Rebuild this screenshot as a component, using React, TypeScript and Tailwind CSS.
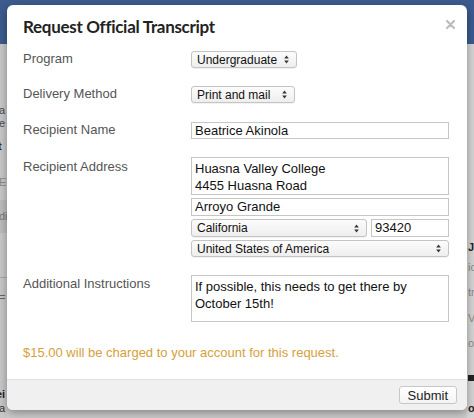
import React from "react";

function SelectBox({ value, className }: { value: string; className: string }) {
  return (
    <div
      className={`flex items-center justify-between pl-[5px] pr-[7px] text-[12px] text-[#111] rounded-[3px] border border-[#c4c4c4] bg-gradient-to-b from-[#fcfcfc] to-[#eeeeee] shadow-[0_1px_1px_rgba(0,0,0,0.06)] ${className}`}
    >
      <span className="leading-[14px] whitespace-nowrap">{value}</span>
      <svg width="5" height="9" viewBox="0 0 5 9" className="shrink-0">
        <path d="M2.5 0.5 L4.8 3.4 L0.2 3.4 Z" fill="#333" />
        <path d="M2.5 8.5 L4.8 5.6 L0.2 5.6 Z" fill="#333" />
      </svg>
    </div>
  );
}

function TextInput({ value, className }: { value: string; className: string }) {
  return (
    <input
      readOnly
      value={value}
      className={`block border border-[#c6c6c6] bg-white px-[3px] text-[13px] text-[#111] outline-none ${className}`}
    />
  );
}

function Area({ value, className }: { value: string; className: string }) {
  return (
    <textarea
      readOnly
      value={value}
      className={`block resize-none overflow-hidden border border-[#c6c6c6] bg-white px-[3px] pt-[2px] text-[13px] leading-[17px] text-[#111] outline-none ${className}`}
    />
  );
}

export default function App() {
  const label = "text-[13px] leading-[15px] text-[#555]";
  return (
    <div className="relative w-[474px] h-[418px] overflow-hidden font-['Liberation_Sans',Arial,sans-serif] bg-[#cdcdcd]">
      {/* backdrop page (dimmed) */}
      <div className="flex flex-col h-full">
        <div className="h-[44px] bg-[#3d5b8e] shrink-0" />
        <div className="flex flex-1 justify-between">
          <div className="w-[7px] overflow-hidden bg-[#c8c8c8] flex flex-col text-[11px] leading-[11px] text-[#4a4a4a]">
            <div className="mt-[61px] -ml-[1px]">a</div>
            <div className="mt-[2px] -ml-[1px]">e</div>
            <div className="mt-[12px] -ml-[2px] font-bold text-[#222]">t</div>
            <div className="mt-[25px] -ml-[1px] text-[#8a8a8a]">E</div>
            <div className="mt-[12px] h-[33px] bg-[#bdbdbd] flex items-center text-[#777]">
              <span className="-ml-[1px]">di</span>
            </div>
            <div className="mt-[44px] h-px bg-[#aaaaaa]" />
            <div className="mt-[14px] -ml-[1px] text-[#666]">=</div>
            <div className="mt-[86px] -ml-[4px] font-bold text-[#222]">ei</div>
            <div className="mt-[3px] -ml-[1px] text-[#333]">a</div>
          </div>
          <div className="w-[7px] overflow-hidden bg-[#d5d5d5] flex flex-col text-[11px] leading-[11px] text-[#8a8a8a]">
            <div className="mt-[198px] ml-[1px] font-bold text-[#222]">J</div>
            <div className="mt-[9px] ml-[1px]">ic</div>
            <div className="mt-[14px] ml-[1px]">tr</div>
            <div className="mt-[15px] ml-[1px]">V</div>
            <div className="mt-[14px] ml-[1px]">o</div>
            <div className="mt-[26px] ml-[1px] h-[6px] w-[6px] bg-[#222]" />
            <div className="mt-[22px] ml-[1px] font-bold text-[#222]">o</div>
          </div>
        </div>
      </div>

      {/* modal */}
      <div className="absolute left-[7px] top-[5px] w-[460px] h-[405px] bg-white rounded-[6px] shadow-[0_3px_10px_rgba(0,0,0,0.35)] overflow-hidden flex flex-col">
        <div className="flex items-start justify-between pl-[16px] pr-[12px] pt-[12px]">
          <h1 className="font-['Lato',sans-serif] font-bold text-[17px] leading-[20px] tracking-[-0.3px] text-[#222]">
            Request Official Transcript
          </h1>
          <button className="mt-[3px] w-[9px] h-[9px] flex items-center justify-center" aria-label="Close">
            <svg width="9" height="9" viewBox="0 0 9 9">
              <path d="M1 1 L8 8 M8 1 L1 8" stroke="#bdbdbd" strokeWidth="2.2" strokeLinecap="round" />
            </svg>
          </button>
        </div>

        <div className="pl-[16px] pr-[18px] pt-[14px]">
          <div className="grid grid-cols-[168px_258px] gap-y-[18px]">
            <div className={label}>Program</div>
            <div>
              <SelectBox value="Undergraduate" className="w-[106px] h-[17px]" />
            </div>

            <div className={label}>Delivery Method</div>
            <div>
              <SelectBox value="Print and mail" className="w-[104px] h-[17px]" />
            </div>

            <div className={`${label} mt-px`}>Recipient Name</div>
            <div className="mt-px">
              <TextInput value="Beatrice Akinola" className="w-[258px] h-[17px]" />
            </div>

            <div className={`${label} pt-[2px]`}>Recipient Address</div>
            <div className="flex flex-col gap-[3px]">
              <Area value={"Huasna Valley College\n4455 Huasna Road"} className="w-[258px] h-[38px]" />
              <TextInput value="Arroyo Grande" className="w-[258px] h-[18px]" />
              <div className="flex gap-[4px]">
                <SelectBox value="California" className="w-[176px] h-[18px]" />
                <TextInput value="93420" className="w-[78px] h-[18px]" />
              </div>
              <SelectBox value="United States of America" className="w-[258px] h-[17px]" />
            </div>

            <div className={`${label} pt-[1px]`}>Additional Instructions</div>
            <div>
              <Area
                value="If possible, this needs to get there by October 15th!"
                className="w-[258px] h-[47px]"
              />
            </div>
          </div>

          <p className="mt-[23px] text-[13px] leading-[15px] text-[#d6a03a]">
            $15.00 will be charged to your account for this request.
          </p>
        </div>

        <div className="mt-auto h-[31px] border-t border-[#e0e0e0] bg-[#f0f0f0] flex items-center justify-end pr-[10px]">
          <button className="h-[18px] px-[8px] rounded-[3px] border border-[#c8c8c8] bg-gradient-to-b from-[#ffffff] to-[#f4f4f4] text-[13px] leading-[15px] text-[#222]">
            Submit
          </button>
        </div>
      </div>
    </div>
  );
}
